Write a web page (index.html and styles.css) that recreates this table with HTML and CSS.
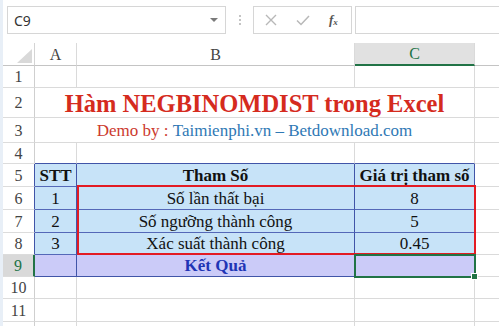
FILE: index.html
```html
<!DOCTYPE html>
<html>
<head>
<meta charset="utf-8">
<link rel="stylesheet" href="styles.css">
</head>
<body>
<div class="app">
  <div class="toolbar">
    <div class="namebox"><span class="ref">C9</span><span class="caret"></span></div>
    <div class="grip"><i></i><i></i><i></i></div>
    <div class="fbtns">
      <svg class="ico" width="14" height="14" viewBox="0 0 14 14"><path d="M2 2L12 12M12 2L2 12" stroke="#b8b8b8" stroke-width="1.4" fill="none"/></svg>
      <svg class="ico" width="16" height="14" viewBox="0 0 16 14"><path d="M2 7.5L6 11.5L14 3" stroke="#b8b8b8" stroke-width="1.5" fill="none"/></svg>
      <span class="fx">f<sub>x</sub></span>
    </div>
    <div class="finput"></div>
  </div>
  <div class="sheet">
    <div class="grid">
      <div class="corner"><span class="tri"></span></div>
      <div class="ch">A</div>
      <div class="ch">B</div>
      <div class="ch sel">C</div>
      <div class="ch last"></div>

      <div class="rh">1</div><div class="c"></div><div class="c"></div><div class="c"></div><div class="c d"></div>

      <div class="rh">2</div><div class="c m title">Hàm NEGBINOMDIST trong Excel</div><div class="c d"></div>

      <div class="rh">3</div><div class="c m demo"><span class="red">Demo by : </span><span class="blue">Taimienphi.vn – Betdownload.com</span></div><div class="c d"></div>

      <div class="rh">4</div><div class="c tb"></div><div class="c tb"></div><div class="c tb"></div><div class="c d"></div>

      <div class="rh tr">5</div><div class="c t b">STT</div><div class="c t b">Tham Số</div><div class="c t b">Giá trị tham số</div><div class="c d"></div>

      <div class="rh tr">6</div><div class="c t">1</div><div class="c t">Số lần thất bại</div><div class="c t">8</div><div class="c d"></div>

      <div class="rh tr">7</div><div class="c t">2</div><div class="c t">Số ngưỡng thành công</div><div class="c t">5</div><div class="c d"></div>

      <div class="rh tr">8</div><div class="c t">3</div><div class="c t">Xác suất thành công</div><div class="c t">0.45</div><div class="c d"></div>

      <div class="rh rsel">9</div><div class="c t lav"></div><div class="c t lav kq">Kết Quả</div><div class="c t lav"></div><div class="c d"></div>

      <div class="rh">10</div><div class="c"></div><div class="c"></div><div class="c"></div><div class="c d"></div>

      <div class="rh">11</div><div class="c"></div><div class="c"></div><div class="c"></div><div class="c d"></div>

      <div class="rh"></div><div class="c"></div><div class="c"></div><div class="c"></div><div class="c d"></div>
    </div>
    <div class="redbox"></div>
    <div class="selbox"><span class="handle"></span></div>
  </div>
</div>
</body>
</html>
```
FILE: styles.css
```css
* { box-sizing: border-box; }
html, body { margin: 0; padding: 0; background: #fff; }
body { width: 499px; height: 326px; overflow: hidden; }
.app { border-left: 3px solid #e8eff7; height: 326px; font-family: "Liberation Serif", "Tinos", "Times New Roman", "DejaVu Serif", serif; }

.toolbar { height: 43px; display: flex; align-items: flex-start; padding-top: 6px; padding-left: 4px; }
.namebox { width: 219px; height: 28px; border: 1px solid #d6d6d6; display: flex; align-items: center; justify-content: space-between; padding: 0 6px 0 6px; }
.ref { font-family: "Noto Sans", sans-serif; font-size: 14px; color: #333; }
.caret { width: 0; height: 0; border-left: 4px solid transparent; border-right: 4px solid transparent; border-top: 4px solid #7a7a7a; margin-right: 1px; }
.grip { width: 27px; height: 28px; display: flex; flex-direction: column; align-items: center; justify-content: center; gap: 2px; }
.grip i { display: block; width: 2px; height: 2px; background: #b0b0b0; border-radius: 1px; }
.fbtns { width: 99px; height: 28px; border: 1px solid #d6d6d6; display: flex; align-items: center; padding-left: 10px; gap: 17px; }
.fx { font-family: "Liberation Serif", "DejaVu Serif", serif; font-style: italic; font-weight: bold; font-size: 13px; color: #555; margin-left: 1px; }
.fx sub { font-size: 9px; vertical-align: -1px; }
.finput { flex: 1; height: 28px; margin-left: 3px; border: 1px solid #d6d6d6; border-right: none; }

.sheet { position: relative; }
.grid { display: grid; grid-template-columns: 32px 42px 278px 120px 1fr; grid-template-rows: 23px 22px 30px 25px 21px 23px 23px 23px 22px 22px 22px 23px 10px; }
.corner { position: relative; border-right: 1px solid #d4d4d4; border-bottom: 1px solid #c4c4c4; }
.tri { position: absolute; right: 2px; bottom: 2px; width: 0; height: 0; border-left: 15px solid transparent; border-bottom: 14px solid #d9d9d9; }
.ch { display: flex; align-items: center; justify-content: center; font-size: 16px; color: #444; border-right: 1px solid #dadada; border-bottom: 1px solid #c4c4c4; padding-top: 1px; }
.ch.sel { background: #e1e1e1; color: #217346; border-bottom: 2px solid #217346; }
.ch.last { border-right: none; }
.rh { display: flex; align-items: center; justify-content: center; font-size: 16px; color: #444; border-right: 1px solid #cfcfcf; border-bottom: 1px solid #dcdcdc; padding-top: 1px; }
.rh.tr { border-right: 1px solid #4155a8; }
.rh.rsel { background: #d9d9d9; color: #217346; border-right: 2px solid #217346; }
.c { display: flex; align-items: center; justify-content: center; font-size: 17px; color: #111; border-right: 1px solid #dadada; border-bottom: 1px solid #dadada; white-space: nowrap; padding-top: 1px; }
.c.d { border-right: none; }
.c.m { grid-column: span 3; }
.title { font-size: 24.5px; font-weight: bold; color: #d52b1e; padding-top: 2px; }
.demo { font-size: 17px; }
.red { color: #cc3a2e; white-space: pre; }
.blue { color: #2f79b5; }
.c.tb { border-bottom: 1px solid #4155a8; }
.c.t { background: #c7e3f8; border-right: 1px solid #4155a8; border-bottom: 1px solid #5468b8; }
.c.b { font-weight: bold; }
.c.lav { background: #cbcbf8; border-bottom: 1px solid #4155a8; }
.kq { font-weight: bold; color: #1f35b5; }

.redbox { position: absolute; left: 74px; top: 142px; width: 399px; height: 70px; border: 2px solid #e31b23; }
.selbox { position: absolute; left: 351px; top: 211px; width: 122px; height: 24px; border: 2px solid #217346; }
.handle { position: absolute; right: -4px; bottom: -4px; width: 5px; height: 5px; background: #217346; border: 1px solid #fff; box-sizing: content-box; }
```
